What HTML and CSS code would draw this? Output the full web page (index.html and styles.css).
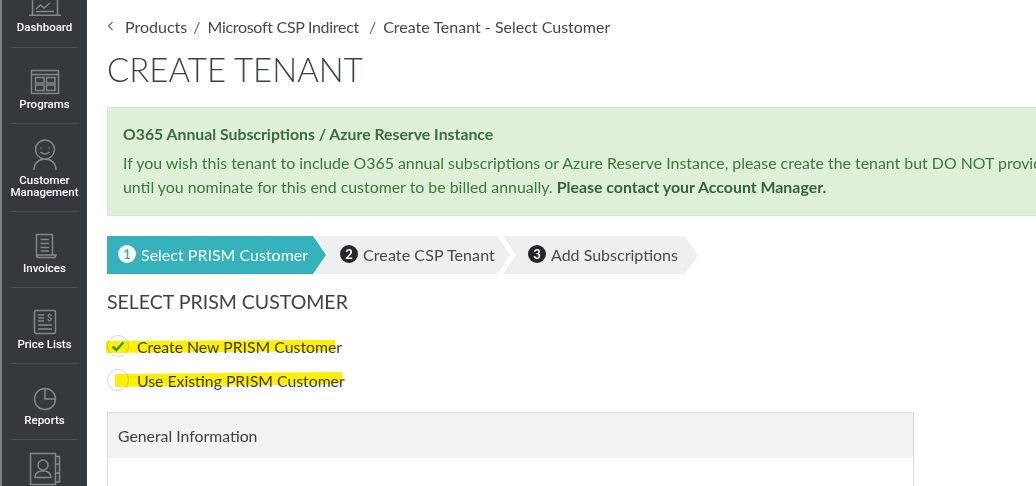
FILE: index.html
```html
<!DOCTYPE html>
<html lang="en">
<head>
<meta charset="utf-8">
<title>Create Tenant</title>
<link rel="stylesheet" href="styles.css">
</head>
<body>
<div class="app">
  <nav class="sidebar">
    <a class="nav-item nav-first">
      <svg class="nav-icon" width="34" height="16" viewBox="0 0 34 16"><path d="M4.500 0V15M29.500 0V15M1 15.200H33M8 9l4.500-4 3.500 3 6-5M8 11.500H26"/></svg>
      <span>Dashboard</span>
    </a>
    <a class="nav-item">
      <svg class="nav-icon" width="30" height="26" viewBox="0 0 30 26"><path d="M1.500 1.500H28.500V24.500H1.500ZM1.500 5.500H28.500"/><path d="M5.500 8.500H14V14H5.500ZM16.500 8.500H25V14H16.500ZM5.500 16H14V21.500H5.500ZM16.500 16H25V21.500H16.500Z"/></svg>
      <span>Programs</span>
    </a>
    <a class="nav-item nav-tall">
      <svg class="nav-icon" width="28" height="32" viewBox="0 0 28 32"><circle cx="14" cy="10.500" r="9.500"/><path d="M3 31c0-7 5-11 11-11s11 4 11 11M10 8.500v1M18 8.500v1M9.500 13c2.500 2.500 6.500 2.500 9 0"/></svg>
      <span>Customer<br>Management</span>
    </a>
    <a class="nav-item">
      <svg class="nav-icon" width="24" height="26" viewBox="0 0 24 26"><path d="M3.500 22V1.500H19.500V22M3.500 22c0 2 1 2.500 2 2.500H22l1-2.500H3.500ZM7.500 6.500H16M7.500 10.500H16M7.500 14.500H16M7.500 18H16"/></svg>
      <span>Invoices</span>
    </a>
    <a class="nav-item">
      <svg class="nav-icon" width="24" height="26" viewBox="0 0 24 26"><rect x="1.500" y="1.500" width="21" height="23" rx="1.500"/><path d="M5 6H11M5 9H11M5 12H11M5 16H19M5 20H19"/><text x="14" y="12" class="dollar">$</text></svg>
      <span>Price Lists</span>
    </a>
    <a class="nav-item">
      <svg class="nav-icon" width="24" height="24" viewBox="0 0 24 24"><circle cx="12" cy="12" r="10.500"/><path d="M12 1.500V12H22.500"/></svg>
      <span>Reports</span>
    </a>
    <a class="nav-item nav-last">
      <svg class="nav-icon" width="32" height="34" viewBox="0 0 32 34"><path d="M1.500 1.500H26.500V32.500H1.500ZM26.500 4.500H30.500V30H26.500M26.500 12H30.500M26.500 21H30.500"/><circle cx="14" cy="13" r="5"/><path d="M6 25.500c0-5 3-6.500 8-6.500s8 1.500 8 6.500Z"/></svg>
    </a>
  </nav>
  <main class="content">
    <div class="crumbs">
      <svg class="crumb-back" width="7" height="10" viewBox="0 0 7 10"><path d="M5.500 1L1.500 5l4 4"/></svg>
      <span>Products</span><span class="sep">/</span><span class="crumb-mid">Microsoft CSP Indirect</span><span class="sep">/</span><span>Create Tenant - Select Customer</span>
    </div>
    <h1 class="title">CREATE TENANT</h1>
    <div class="notice">
      <h2 class="notice-head">O365 Annual Subscriptions / Azure Reserve Instance</h2>
      <p class="notice-line">If you wish this tenant to include O365 annual subscriptions or Azure Reserve Instance, please create the tenant but DO NOT provide</p>
      <p class="notice-line">until you nominate for this end customer to be billed annually. <b>Please contact your Account Manager.</b></p>
    </div>
    <div class="steps">
      <div class="step step-active"><span class="badge">1</span>Select PRISM Customer</div>
      <div class="step step-two"><span class="badge">2</span>Create CSP Tenant</div>
      <div class="step step-three"><span class="badge">3</span>Add Subscriptions</div>
    </div>
    <h3 class="section">SELECT PRISM CUSTOMER</h3>
    <div class="option option-one">
      <span class="radio"><svg width="14" height="11" viewBox="0 0 14 11"><path d="M1.500 5.500l3.800 3.500 7-7.500"/></svg></span>
      <span>Create New PRISM Customer</span>
      <i class="mark mark-one"></i>
    </div>
    <div class="option option-two">
      <span class="radio"></span>
      <span>Use Existing PRISM Customer</span>
      <i class="mark mark-two"></i>
    </div>
    <section class="panel">
      <div class="panel-head">General Information</div>
    </section>
  </main>
</div>
</body>
</html>
```
FILE: styles.css
```css
* { box-sizing: border-box; }
html, body { margin: 0; height: 486px; overflow: hidden; background: #fff; }
body { font-family: "Lato", "Open Sans", sans-serif; color: #3a3f45; }
.app { display: flex; height: 486px; overflow: hidden; }

.sidebar {
  flex: 0 0 87px;
  height: 486px;
  overflow: hidden;
  background: #35383c;
  border-left: 2px solid #7b8184;
  padding: 0 9px;
  display: flex;
  flex-direction: column;
}
.nav-item {
  flex: 0 0 76px;
  display: flex;
  flex-direction: column;
  align-items: center;
  justify-content: flex-end;
  padding-bottom: 13px;
  border-bottom: 1px solid #4b4e52;
  color: #fff;
  font-family: "Roboto", sans-serif;
  font-size: 11.500px;
  font-weight: 500;
  line-height: 12px;
  text-align: center;
  white-space: nowrap;
}
.nav-item span { margin-top: 3px; }
.nav-first { flex-basis: 48px; justify-content: flex-start; padding-bottom: 0; }
.nav-first span { margin-top: 5px; }
.nav-tall { flex-basis: 88px; }
.nav-last { flex-basis: 46px; justify-content: flex-start; padding: 12px 0 0; border: 0; overflow: hidden; }
.nav-icon { fill: none; stroke: #85888b; stroke-width: 1.500; flex: none; overflow: hidden; }
.dollar { font-family: "Roboto", sans-serif; font-size: 9px; font-weight: 700; fill: #85888b; stroke: none; }

.content { flex: 1 1 auto; min-width: 0; padding: 17px 0 0 20px; overflow: hidden; }
.crumbs { display: flex; align-items: center; height: 18px; font-size: 16px; white-space: nowrap; color: #44494e; }
.crumb-back { fill: none; stroke: #6f7478; stroke-width: 1.200; margin-right: 11px; flex: none; }
.crumb-mid { letter-spacing: -0.300px; margin-right: 4px; }
.sep { margin: 0 7px 0 6px; color: #666; }
.title { margin: 15px 0 0; font-size: 33px; line-height: 38px; font-weight: 300; color: #3d4247; white-space: nowrap; }

.notice {
  width: 1000px;
  height: 109px;
  margin-top: 19px;
  padding: 16px 15px 0;
  background: #dff0d8;
  border: 1px solid #d6e9c6;
  color: #3c763d;
  white-space: nowrap;
}
.notice-head { margin: 0 0 7px; font-size: 15.800px; line-height: 20px; font-weight: 700; color: #3c6b3d; }
.notice-line { margin: 0; font-size: 15.900px; line-height: 24px; }
.notice-line b { font-weight: 700; color: #35633a; }

.steps { display: flex; height: 38px; margin-top: 20px; font-size: 16px; white-space: nowrap; }
.step {
  display: flex;
  align-items: center;
  padding-bottom: 2px;
  background: #efefef;
  color: #44494e;
  clip-path: polygon(0 0, calc(100% - 13px) 0, 100% 50%, calc(100% - 13px) 100%, 0 100%, 13px 50%);
}
.step-active { width: 219px; padding-left: 11px; background: #35b2bb; color: #fff; clip-path: polygon(0 0, calc(100% - 13px) 0, 100% 50%, calc(100% - 13px) 100%, 0 100%); }
.step-two { width: 195px; margin-left: -11px; padding-left: 25px; letter-spacing: 0.100px; }
.step-three { width: 195px; margin-left: -7px; padding-left: 25px; }
.badge {
  display: flex;
  align-items: center;
  justify-content: center;
  width: 18px;
  height: 18px;
  margin-right: 5px;
  border-radius: 50%;
  background: #24282d;
  color: #fff;
  font-size: 13px;
  font-weight: 700;
}
.step-active .badge { background: #fff; color: #35b2bb; }

.section { margin: 17px 0 0; font-size: 19.500px; line-height: 22px; font-weight: 400; color: #3d4247; white-space: nowrap; }

.option { position: relative; display: flex; align-items: center; height: 22px; font-size: 15.800px; white-space: nowrap; color: #3a3f45; }
.option-one { margin-top: 22px; }
.option-two { margin-top: 12px; }
.radio { display: flex; align-items: center; justify-content: center; width: 22px; height: 22px; margin-right: 8px; border: 1px solid #d9d9d9; border-radius: 50%; background: #fff; }
.radio svg { fill: none; stroke: #35a31c; stroke-width: 2.500; }
.mark { position: absolute; background: #ffef00; mix-blend-mode: multiply; }
.mark-one { left: -1px; top: 5px; width: 229px; height: 13px; clip-path: polygon(0 1px, 100% 0, 100% 11px, 0 100%); }
.mark-two { left: 8px; top: 3px; width: 227px; height: 15px; clip-path: polygon(0 2px, 100% 0, 100% 12px, 0 100%); }

.panel { width: 807px; margin-top: 21px; border: 1px solid #dcdcdc; height: 120px; }
.panel-head { height: 45px; padding-left: 10px; display: flex; align-items: center; background: #f2f2f2; font-size: 15.800px; color: #3a3f45; }
```
